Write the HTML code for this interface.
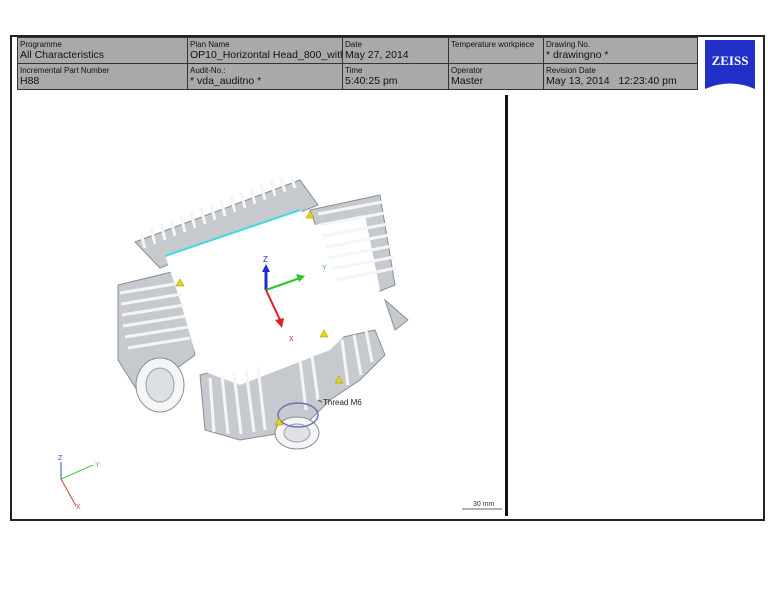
<!DOCTYPE html>
<html><head><meta charset="utf-8"><style>
*{margin:0;padding:0;box-sizing:border-box}
body{width:768px;height:594px;background:#fff;position:relative;font-family:"Liberation Sans",sans-serif;overflow:hidden}
.frame{position:absolute;left:10px;top:35px;width:755px;height:486px;border:2px solid #222;}
.cell{position:absolute;background:#a9a9a9;border:1px solid #333;color:#111;overflow:hidden;white-space:nowrap}
.cell .l{font-size:8px;line-height:9px;padding-left:2px;margin-top:2px}
.cell .v{font-size:10.5px;line-height:12px;padding-left:2px}
.div{position:absolute;left:505px;top:95px;width:3px;height:421px;background:#111}
</style></head><body>
<div class="frame"></div>
<div class="cell" style="left:17px;top:37px;width:171px;height:27px"><div class="l">Programme</div><div class="v">All Characteristics</div></div>
<div class="cell" style="left:187px;top:37px;width:156px;height:27px"><div class="l">Plan Name</div><div class="v">OP10_Horizontal Head_800_with</div></div>
<div class="cell" style="left:342px;top:37px;width:107px;height:27px"><div class="l">Date</div><div class="v">May 27, 2014</div></div>
<div class="cell" style="left:448px;top:37px;width:96px;height:27px"><div class="l">Temperature workpiece</div></div>
<div class="cell" style="left:543px;top:37px;width:155px;height:27px"><div class="l">Drawing No.</div><div class="v">* drawingno *</div></div>
<div class="cell" style="left:17px;top:63px;width:171px;height:27px"><div class="l">Incremental Part Number</div><div class="v">H88</div></div>
<div class="cell" style="left:187px;top:63px;width:156px;height:27px"><div class="l">Audit-No.:</div><div class="v">* vda_auditno *</div></div>
<div class="cell" style="left:342px;top:63px;width:107px;height:27px"><div class="l">Time</div><div class="v">5:40:25 pm</div></div>
<div class="cell" style="left:448px;top:63px;width:96px;height:27px"><div class="l">Operator</div><div class="v">Master</div></div>
<div class="cell" style="left:543px;top:63px;width:155px;height:27px"><div class="l">Revision Date</div><div class="v">May 13, 2014 &nbsp; 12:23:40 pm</div></div>
<svg style="position:absolute;left:705px;top:40px" width="50" height="49" viewBox="0 0 50 49">
<path d="M0 0H50V49Q25 38 0 49Z" fill="#1f2fc8"/>
<text x="25" y="25" font-family="Liberation Serif,serif" font-weight="bold" font-size="13" fill="#fff" text-anchor="middle">ZEISS</text>
</svg>
<div class="div"></div>
<svg style="position:absolute;left:0;top:0" width="768" height="594">
<g fill="#c6cacf" stroke="#8a8e94" stroke-width="1">
<path d="M135 242L300 180L318 205L160 268Z"/>
<path d="M310 210L380 195L395 285L345 305Z"/>
<path d="M118 285L180 270L195 355L140 395L118 360Z"/>
<path d="M200 375L330 340L375 330L385 355L360 380L330 400L300 430L240 440L205 430Z"/>
<path d="M385 300L408 320L395 330Z"/>
</g>
<path d="M165 255L300 210L315 225L365 215L380 290L360 320L330 350L240 385L200 370L180 300Z" fill="#fff"/>
<g stroke="#f4f5f6" stroke-width="3">
<line x1="145" y1="248" x2="141" y2="234"/><line x1="155" y1="244" x2="151" y2="228"/><line x1="165" y1="240" x2="161" y2="224"/><line x1="175" y1="236" x2="171" y2="220"/><line x1="185" y1="232" x2="181" y2="216"/><line x1="195" y1="228" x2="191" y2="212"/><line x1="205" y1="224" x2="201" y2="208"/><line x1="215" y1="220" x2="211" y2="204"/><line x1="225" y1="216" x2="221" y2="200"/><line x1="235" y1="212" x2="231" y2="196"/><line x1="245" y1="208" x2="241" y2="192"/><line x1="255" y1="204" x2="251" y2="188"/><line x1="265" y1="200" x2="261" y2="184"/><line x1="275" y1="196" x2="271" y2="180"/><line x1="285" y1="192" x2="281" y2="178"/><line x1="295" y1="188" x2="291" y2="176"/>
<line x1="318" y1="214" x2="382" y2="202"/><line x1="320" y1="225" x2="385" y2="213"/><line x1="323" y1="236" x2="388" y2="224"/><line x1="326" y1="247" x2="390" y2="235"/><line x1="329" y1="258" x2="392" y2="246"/><line x1="332" y1="269" x2="394" y2="257"/><line x1="336" y1="280" x2="396" y2="268"/>
<line x1="120" y1="293" x2="180" y2="283"/><line x1="121" y1="304" x2="182" y2="294"/><line x1="122" y1="315" x2="184" y2="305"/><line x1="123" y1="326" x2="186" y2="316"/><line x1="125" y1="337" x2="188" y2="327"/><line x1="128" y1="348" x2="190" y2="338"/>
<line x1="210" y1="378" x2="214" y2="432"/><line x1="222" y1="376" x2="228" y2="434"/><line x1="234" y1="373" x2="241" y2="434"/><line x1="246" y1="370" x2="254" y2="432"/><line x1="258" y1="367" x2="265" y2="430"/><line x1="300" y1="360" x2="306" y2="410"/><line x1="312" y1="356" x2="318" y2="400"/><line x1="342" y1="340" x2="348" y2="385"/><line x1="354" y1="335" x2="361" y2="375"/><line x1="366" y1="330" x2="372" y2="362"/>
</g>
<ellipse cx="160" cy="385" rx="24" ry="27" fill="#f4f5f6" stroke="#8a8e94"/>
<ellipse cx="160" cy="385" rx="14" ry="17" fill="#dcdfe3" stroke="#9a9ea4"/>
<ellipse cx="297" cy="433" rx="22" ry="16" fill="#f4f5f6" stroke="#8a8e94"/>
<ellipse cx="297" cy="433" rx="13" ry="9" fill="#dfe1e4" stroke="#9a9ea4"/>
<ellipse cx="298" cy="415" rx="20" ry="12" fill="none" stroke="#7070b8" stroke-width="1.5"/>
<line x1="165" y1="256" x2="300" y2="210" stroke="#3fd9e6" stroke-width="2"/>
<g fill="#e8d800" stroke="#9a8a00" stroke-width=".5">
<path d="M306 218l4-7l4 7z"/><path d="M176 286l4-7l4 7z"/><path d="M320 337l4-7l4 7z"/><path d="M335 383l4-7l4 7z"/><path d="M275 425l4-7l4 7z"/>
</g>
<line x1="266" y1="290" x2="266" y2="268" stroke="#1e2ccc" stroke-width="3"/><path d="M262 272l4-8l4 8z" fill="#1e2ccc"/>
<line x1="266" y1="290" x2="300" y2="278" stroke="#2ac42a" stroke-width="2"/><path d="M296 274l9 2l-6 6z" fill="#2ac42a"/>
<line x1="266" y1="290" x2="280" y2="320" stroke="#e02020" stroke-width="2"/><path d="M275 320l9-2l-2 10z" fill="#e02020"/>
<text x="263" y="262" font-size="8" fill="#1e2ccc">Z</text><text x="322" y="270" font-size="7" fill="#2ac42a">Y</text><text x="289" y="341" font-size="7" fill="#e02020">X</text>
<line x1="318" y1="400" x2="322" y2="402" stroke="#555"/>
<text x="323" y="405" font-size="8" fill="#222">Thread M6</text>
<line x1="61" y1="479" x2="61" y2="462" stroke="#4444cc"/><line x1="61" y1="479" x2="93" y2="465" stroke="#44cc44"/><line x1="61" y1="479" x2="76" y2="506" stroke="#cc4444"/>
<text x="58" y="460" font-size="7" fill="#4444cc">Z</text><text x="95" y="467" font-size="7" fill="#44cc44">Y</text><text x="76" y="509" font-size="7" fill="#cc4444">X</text>
<line x1="462" y1="509" x2="502" y2="509" stroke="#333" stroke-width=".8"/>
<text x="473" y="506" font-size="7" fill="#333">30 mm</text>
</svg>
</body></html>
